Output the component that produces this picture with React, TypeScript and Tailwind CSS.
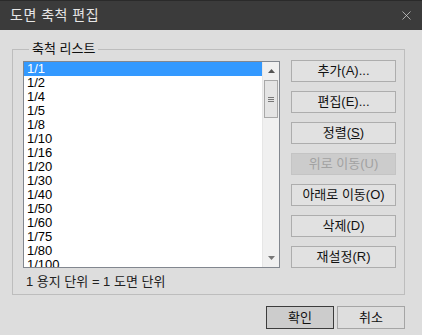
import { X } from 'lucide-react'

const scales = ['1/1', '1/2', '1/4', '1/5', '1/8', '1/10', '1/16', '1/20', '1/30', '1/40', '1/50', '1/60', '1/75', '1/80', '1/100']

const font = "font-['Liberation_Sans','Noto_Sans_CJK_KR',sans-serif]"

function SideButton({ children, disabled }: { children: React.ReactNode; disabled?: boolean }) {
  return (
    <button
      className={
        disabled
          ? 'w-[105px] h-[22px] border border-[#c4c4c4] bg-[#cccccc] text-[13px] text-[#a2a2a2] flex items-center justify-center'
          : 'w-[105px] h-[22px] border border-[#adadad] bg-[#e1e1e1] text-[13px] text-[#111] flex items-center justify-center'
      }
    >
      {children}
    </button>
  )
}

export default function App() {
  return (
    <div className={`w-[422px] h-[335px] bg-[#dddddd] ${font} overflow-hidden`}>
      {/* Title bar */}
      <div className="h-[30px] bg-[#3b3b3b] border-t border-[#2a2a2a] flex items-center justify-between pl-[10px] pr-[8px]">
        <span className="text-[14px] text-[#e6e6e6] tracking-[0.5px]">도면 축척 편집</span>
        <X className="w-[15px] h-[15px] text-[#dcdcdc]" strokeWidth={1.1} />
      </div>

      <div className="pt-[11px]">
        <fieldset className="ml-[12px] w-[393px] border border-[#bdbdbd] pl-[10px] pb-[4px]">
          <legend className="ml-[6px] px-[3px] text-[13px] leading-[16px] text-[#111]">축척 리스트</legend>

          <div className="flex items-start pt-[4px]">
            {/* List box */}
            <div className="w-[257px] h-[207px] border border-[#82878f] bg-white flex overflow-hidden">
              <div className="flex-1 flex flex-col">
                {scales.map((s, i) => (
                  <div
                    key={s}
                    className={
                      i === 0
                        ? 'h-[14px] shrink-0 pl-[3px] text-[13px] leading-[14px] bg-[#3399ff] text-white'
                        : 'h-[14px] shrink-0 pl-[3px] text-[13px] leading-[14px] text-black'
                    }
                  >
                    {s}
                  </div>
                ))}
              </div>
              {/* Scrollbar */}
              <div className="w-[17px] bg-[#f0f0f0] border-l border-[#e6e6e6] flex flex-col items-center">
                <div className="h-[18px] flex items-center justify-center">
                  <svg width="7" height="4" viewBox="0 0 7 4">
                    <path d="M0 4 L3.5 0 L7 4 Z" fill="#555" />
                  </svg>
                </div>
                <div className="w-[14px] h-[38px] border border-[#a8a8a8] bg-[#e4e4e4] flex flex-col items-center justify-center gap-[1px]">
                  <div className="w-[6px] h-[1px] bg-[#777]" />
                  <div className="w-[6px] h-[1px] bg-[#777]" />
                  <div className="w-[6px] h-[1px] bg-[#777]" />
                </div>
                <div className="flex-1" />
                <div className="h-[18px] flex items-center justify-center">
                  <svg width="7" height="4" viewBox="0 0 7 4">
                    <path d="M0 0 L3.5 4 L7 0 Z" fill="#777" />
                  </svg>
                </div>
              </div>
            </div>

            {/* Buttons */}
            <div className="ml-[11px] -mt-[1px] flex flex-col gap-[9px]">
              <SideButton>추가(A)...</SideButton>
              <SideButton>편집(E)...</SideButton>
              <SideButton>
                정렬(<span className="underline">S</span>)
              </SideButton>
              <SideButton disabled>위로 이동(U)</SideButton>
              <SideButton>아래로 이동(O)</SideButton>
              <SideButton>삭제(D)</SideButton>
              <SideButton>재설정(R)</SideButton>
            </div>
          </div>

          <div className="mt-[6px] pl-[3px] text-[13px] leading-[16px] text-[#222]">1 용지 단위 = 1 도면 단위</div>
        </fieldset>

        <div className="mt-[11px] flex justify-end gap-[3px] pr-[17px]">
          <button className="w-[68px] h-[23px] border border-[#3c3c3c] bg-[#cccccc] text-[13px] text-[#111] flex items-center justify-center">
            확인
          </button>
          <button className="w-[68px] h-[23px] border border-[#a5a5a5] bg-[#dedede] text-[13px] text-[#111] flex items-center justify-center">
            취소
          </button>
        </div>
      </div>
    </div>
  )
}
